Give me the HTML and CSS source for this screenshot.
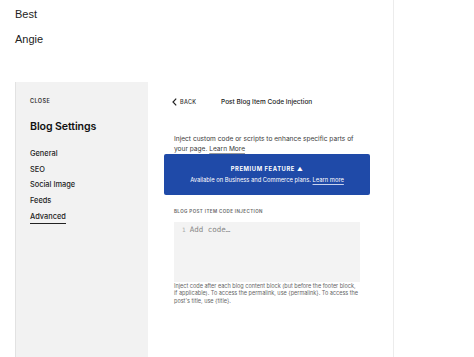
FILE: index.html
```html
<!DOCTYPE html>
<html>
<head>
<meta charset="utf-8">
<link rel="stylesheet" href="styles.css">
</head>
<body>
<div class="page">
  <div class="main">
    <div class="letter">
      <p class="line">Best</p>
      <p class="line">Angie</p>
    </div>
    <div class="editor">
      <aside class="sidebar">
        <div class="close">CLOSE</div>
        <h1 class="side-title">Blog Settings</h1>
        <nav class="nav">
          <a class="nav-item">General</a>
          <a class="nav-item">SEO</a>
          <a class="nav-item">Social Image</a>
          <a class="nav-item">Feeds</a>
          <a class="nav-item active">Advanced</a>
        </nav>
      </aside>
      <section class="content">
        <div class="header">
          <div class="back">
            <svg class="chev" width="5" height="8" viewBox="0 0 5 8"><path d="M4.2 0.6 L1 4 L4.2 7.4" fill="none" stroke="#222" stroke-width="1.2"/></svg>
            <span>BACK</span>
          </div>
          <div class="title">Post Blog Item Code Injection</div>
        </div>
        <p class="desc">Inject custom code or scripts to enhance specific parts of your page. <span class="link">Learn More</span></p>
        <div class="premium">
          <div class="premium-title">PREMIUM FEATURE <span class="tri">▲</span></div>
          <div class="premium-sub">Available on Business and Commerce plans. <span class="plink">Learn more</span></div>
        </div>
        <div class="label">BLOG POST ITEM CODE INJECTION</div>
        <div class="code"><span class="ln">1</span><span class="ph">Add code…</span></div>
        <p class="help">Inject code after each blog content block (but before the footer block, if applicable). To access the permalink, use {permalink}. To access the post's title, use {title}.</p>
      </section>
    </div>
  </div>
  <div class="right"></div>
</div>
</body>
</html>
```

FILE: styles.css
```css
* { box-sizing: border-box; }
html, body { margin: 0; padding: 0; background: #fff; }
body { width: 474px; height: 357px; overflow: hidden; font-family: Inter, "Noto Sans", sans-serif; color: #1a1a1a; }
.page { display: flex; height: 357px; }
.main { width: 394px; border-right: 1px solid #ececec; display: flex; flex-direction: column; }
.right { flex: 1; }
.letter { padding: 8px 0 0 15px; font-family: "Liberation Sans", Arial, sans-serif; font-size: 11px; color: #222; }
.line { margin: 0 0 12px 0; line-height: 13px; }
.editor { margin: 24px 0 0 15px; flex: 1; display: flex; }
.sidebar { width: 133px; background: #f2f2f2; border-left: 1px solid #e2e2e2; padding: 15px 0 0 14px; }
.close { font-size: 5.5px; font-weight: 600; letter-spacing: 0.4px; color: #333; line-height: 8px; }
.side-title { margin: 15px 0 0 0; font-size: 10.6px; font-weight: 600; line-height: 14px; letter-spacing: -0.1px; color: #111; }
.nav { margin-top: 15px; display: flex; flex-direction: column; align-items: flex-start; gap: 5.7px; }
.nav-item { font-size: 7.4px; font-weight: 500; line-height: 10px; color: #222; }
.nav-item.active { border-bottom: 1px solid #222; padding-bottom: 1px; }
.content { flex: 1; padding: 14px 33px 0 26px; display: flex; flex-direction: column; }
.header { display: flex; align-items: center; height: 12px; }
.back { display: flex; align-items: center; gap: 3px; margin-left: -2px; width: 49px; font-size: 5.5px; font-weight: 500; letter-spacing: 0.3px; color: #333; }
.chev { display: block; }
.title { font-size: 6.5px; font-weight: 500; color: #222; }
.desc { margin: 26px 0 0 0; font-size: 6.6px; line-height: 10px; color: #3a3a3a; }
.link { text-decoration: underline; text-decoration-color: #999; text-underline-offset: 1.5px; }
.premium { margin: 0 -10px 0 -10px; height: 41px; background: #1f4aa8; border-radius: 2px; color: #fff; text-align: center; padding-top: 11px; }
.premium-title { font-size: 5.8px; font-weight: 700; letter-spacing: 0.6px; line-height: 8px; }
.tri { font-size: 5.5px; }
.premium-sub { margin-top: 3px; font-size: 5.8px; line-height: 8px; }
.plink { text-decoration: underline; text-decoration-color: #c9d3ee; text-underline-offset: 1.5px; }
.label { margin-top: 14px; font-size: 4.5px; font-weight: 600; letter-spacing: 0.4px; color: #666; line-height: 6px; }
.code { margin-top: 7px; height: 60px; background: #f3f3f3; padding: 3px 0 0 8px; font-family: "DejaVu Sans Mono", monospace; font-size: 7.5px; color: #888; line-height: 10px; }
.ln { color: #aaa; margin-right: 4px; font-size: 6px; }
.help { margin: 1px 0 0 0; font-size: 5.52px; line-height: 7.3px; color: #666; }
```
